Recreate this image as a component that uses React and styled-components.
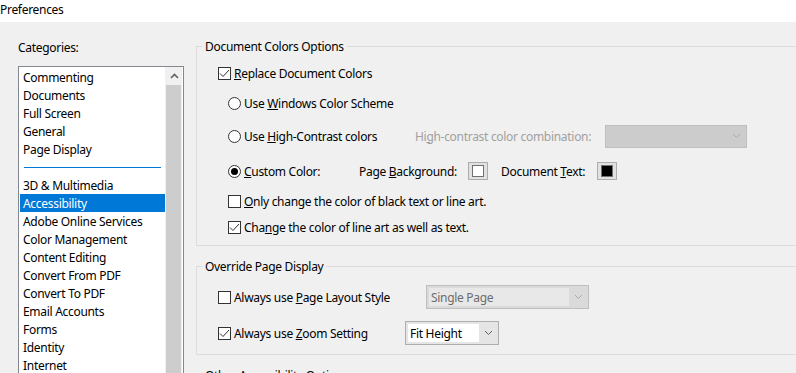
import React from 'react'
import styled, { createGlobalStyle } from 'styled-components'

const GlobalStyle = createGlobalStyle`
  html, body {
    margin: 0;
    padding: 0;
    background: #f0f0f0;
  }
  body {
    font-family: "Noto Sans", "Liberation Sans", sans-serif;
    font-size: 12px;
    letter-spacing: -0.3px;
    color: #000;
  }
`

const Window = styled.div`
  width: 796px;
  height: 373px;
  overflow: hidden;
  display: flex;
  flex-direction: column;
  background: #f0f0f0;
`

const TitleBar = styled.div`
  flex: none;
  height: 22px;
  line-height: 20px;
  background: #fff;
  white-space: nowrap;
`

const Body = styled.div`
  flex: 1;
  display: flex;
  gap: 12px;
  padding-left: 18px;
  min-height: 0;
`

const LeftColumn = styled.div`
  flex: none;
  width: 166px;
  padding-top: 17px;
  display: flex;
  flex-direction: column;
`

const Caption = styled.div`
  line-height: 18px;
  height: 16px;
  margin-bottom: 11px;
`

const ListBox = styled.div`
  height: 330px;
  flex: none;
  display: flex;
  border: 1px solid #828790;
  background: #fff;
`

const List = styled.div`
  width: 146px;
  padding-top: 1px;
`

const Item = styled.div`
  height: 18px;
  line-height: 20px;
  margin-left: 1px;
  padding-left: 3px;
  white-space: nowrap;
  overflow: hidden;
  background: ${p => (p.selected ? '#0078d7' : 'transparent')};
  color: ${p => (p.selected ? '#fff' : '#000')};
`

const Separator = styled.div`
  height: 18px;
  display: flex;
  align-items: center;
  padding-left: 5px;

  &::after {
    content: '';
    width: 137px;
    height: 1px;
    background: #0078d7;
  }
`

const ScrollBar = styled.div`
  width: 17px;
  display: flex;
  flex-direction: column;
  background: #f0f0f0;
`

const ScrollArrow = styled.div`
  height: 18px;
  display: flex;
  align-items: center;
  justify-content: center;
  padding-left: 1px;
`

const Thumb = styled.div`
  flex: 1;
  margin: 0 1px;
  background: #cdcdcd;
`

const RightColumn = styled.div`
  flex: 1;
  min-width: 0;
  padding-top: 15px;
  display: flex;
  flex-direction: column;
  gap: 11px;
`

const Group = styled.fieldset`
  margin: 0;
  padding: 0;
  width: 640px;
  min-width: 0;
  flex: none;
  border: 1px solid #dcdcdc;
`

const Legend = styled.legend`
  margin-left: 5px;
  padding: 2px 3px 0;
  line-height: 16px;
`

const GroupBody = styled.div`
  display: flex;
  flex-direction: column;
  padding: 0 0 ${p => p.bottom}px 21px;
`

const Row = styled.div`
  display: flex;
  align-items: center;
  height: 24px;
  margin-top: ${p => p.top}px;
  padding-left: ${p => (p.indent ? 10 : 0)}px;
  white-space: nowrap;
`

const Cell = styled.div`
  flex: none;
  width: ${p => p.w}px;
  display: flex;
  align-items: center;
`

const Text = styled.span`
  color: ${p => (p.disabled ? '#a0a0a0' : '#000')};
  margin-left: ${p => p.gap || 0}px;
  line-height: 16px;
  padding-top: 1px;
`

const Key = styled.span`
  text-decoration: underline;
  text-underline-offset: 1px;
`

const Box = styled.span`
  flex: none;
  box-sizing: border-box;
  width: 13px;
  height: 13px;
  border: 1px solid #333;
  background: #fff;
  display: flex;
  align-items: center;
  justify-content: center;
`

const RadioCircle = styled(Box)`
  border-radius: 50%;

  &::after {
    content: '';
    display: ${p => (p.checked ? 'block' : 'none')};
    width: 7px;
    height: 7px;
    border-radius: 50%;
    background: #000;
  }
`

const Swatch = styled.span`
  flex: none;
  box-sizing: border-box;
  width: 20px;
  height: 18px;
  border: 1px solid #adadad;
  background: #e1e1e1;
  display: flex;
  align-items: center;
  justify-content: center;
  margin-right: ${p => p.gap || 0}px;

  &::after {
    content: '';
    box-sizing: border-box;
    width: 12px;
    height: 12px;
    border: 1px solid #707070;
    background: ${p => p.color};
  }
`

const Combo = styled.div`
  flex: none;
  box-sizing: border-box;
  width: ${p => p.w}px;
  height: ${p => p.h}px;
  display: flex;
  border: 1px solid ${p => (p.disabled ? '#bfbfbf' : '#adadad')};
  background: ${p => p.bg};
`

const ComboField = styled.div`
  flex: 1;
  margin: 2px 0 2px 2px;
  padding: 1px 0 0 2px;
  display: flex;
  align-items: center;
  background: ${p => (p.disabled ? '#e8e8e8' : '#fff')};
  color: ${p => (p.disabled ? '#6d6d6d' : '#000')};
`

const ComboSpacer = styled.div`
  flex: 1;
`

const ComboArrow = styled.div`
  width: 19px;
  display: flex;
  align-items: center;
  justify-content: center;
`

const Chevron = ({ color = '#606060', up }) => (
  <svg width="9" height="6" viewBox="0 0 9 6">
    <polyline
      points={up ? '1,5 4.5,1.5 8,5' : '1,1 4.5,4.5 8,1'}
      fill="none"
      stroke={color}
      strokeWidth={up ? 1.6 : 1}
    />
  </svg>
)

const Check = ({ checked, children }) => (
  <>
    <Box>
      {checked && (
        <svg width="11" height="11" viewBox="0 0 11 11">
          <polyline points="1,5.5 4,8.5 10,2" fill="none" stroke="#333" strokeWidth="1" />
        </svg>
      )}
    </Box>
    <Text gap={3}>{children}</Text>
  </>
)

const Radio = ({ checked, children }) => (
  <>
    <RadioCircle checked={checked} />
    <Text gap={3}>{children}</Text>
  </>
)

const Dropdown = ({ w, h, disabled, value }) => {
  const bg = disabled ? (value ? '#dadada' : '#cccccc') : '#e5e5e5'
  return (
    <Combo w={w} h={h} disabled={disabled} bg={bg}>
      {value !== undefined ? <ComboField disabled={disabled}>{value}</ComboField> : <ComboSpacer />}
      <ComboArrow>
        <Chevron color={disabled ? '#a8a8a8' : '#606060'} />
      </ComboArrow>
    </Combo>
  )
}

const categories = [
  'Commenting',
  'Documents',
  'Full Screen',
  'General',
  'Page Display',
  '-',
  '3D & Multimedia',
  'Accessibility',
  'Adobe Online Services',
  'Color Management',
  'Content Editing',
  'Convert From PDF',
  'Convert To PDF',
  'Email Accounts',
  'Forms',
  'Identity',
  'Internet',
]

export default function App() {
  return (
    <>
      <GlobalStyle />
      <Window>
        <TitleBar>Preferences</TitleBar>
        <Body>
          <LeftColumn>
            <Caption>Categories:</Caption>
            <ListBox>
              <List>
                {categories.map((c, i) =>
                  c === '-' ? (
                    <Separator key={i} />
                  ) : (
                    <Item key={i} selected={c === 'Accessibility'}>
                      {c}
                    </Item>
                  )
                )}
              </List>
              <ScrollBar>
                <ScrollArrow>
                  <Chevron up />
                </ScrollArrow>
                <Thumb />
              </ScrollBar>
            </ListBox>
          </LeftColumn>

          <RightColumn>
            <Group>
              <Legend>Document Colors Options</Legend>
              <GroupBody bottom={6}>
                <Row top={6}>
                  <Check checked>
                    <Key>R</Key>eplace Document Colors
                  </Check>
                </Row>
                <Row top={6} indent>
                  <Radio>
                    Use <Key>W</Key>indows Color Scheme
                  </Radio>
                </Row>
                <Row top={9} indent>
                  <Cell w={187}>
                    <Radio>
                      Use <Key>H</Key>igh-Contrast colors
                    </Radio>
                  </Cell>
                  <Cell w={190}>
                    <Text disabled>
                      Hi<Key>g</Key>h-contrast color combination:
                    </Text>
                  </Cell>
                  <Dropdown w={142} h={23} disabled />
                </Row>
                <Row top={11} indent>
                  <Cell w={131}>
                    <Radio checked>
                      <Key>C</Key>ustom Color:
                    </Radio>
                  </Cell>
                  <Cell w={109}>
                    <Text>
                      Page <Key>B</Key>ackground:
                    </Text>
                  </Cell>
                  <Swatch color="#fff" gap={13} />
                  <Cell w={96}>
                    <Text>
                      Document <Key>T</Key>ext:
                    </Text>
                  </Cell>
                  <Swatch color="#000" />
                </Row>
                <Row top={6} indent>
                  <Check>
                    <Key>O</Key>nly change the color of black text or line art.
                  </Check>
                </Row>
                <Row top={2} indent>
                  <Check checked>
                    Cha<Key>n</Key>ge the color of line art as well as text.
                  </Check>
                </Row>
              </GroupBody>
            </Group>

            <Group>
              <Legend>Override Page Display</Legend>
              <GroupBody bottom={9}>
                <Row top={10}>
                  <Cell w={208}>
                    <Check>
                      Always use <Key>P</Key>age Layout Style
                    </Check>
                  </Cell>
                  <Dropdown w={163} h={24} disabled value="Single Page" />
                </Row>
                <Row top={12}>
                  <Cell w={187}>
                    <Check checked>
                      Always use <Key>Z</Key>oom Setting
                    </Check>
                  </Cell>
                  <Dropdown w={94} h={24} value="Fit Height" />
                </Row>
              </GroupBody>
            </Group>

            <Group>
              <Legend>Other Accessibility Options</Legend>
            </Group>
          </RightColumn>
        </Body>
      </Window>
    </>
  )
}
